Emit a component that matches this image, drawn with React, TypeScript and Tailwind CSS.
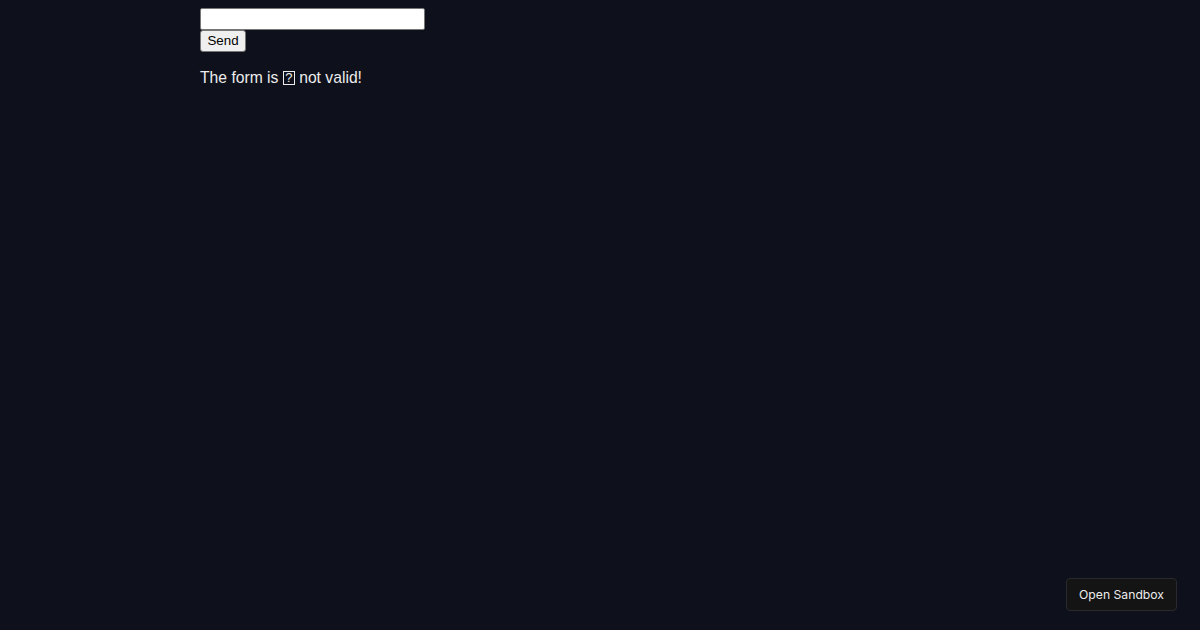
export default function App() {
  return (
    <div className="relative min-h-screen w-full bg-[#0e111b] font-['Liberation_Sans',Arial,sans-serif] text-[#ececec]">
      <div className="mx-auto w-[800px] pt-2">
        <form className="flex flex-col items-start" onSubmit={(e) => e.preventDefault()}>
          <input
            type="text"
            className="h-[22px] w-[225px] rounded-[2px] border border-[#767676] bg-white px-[2px] text-[13px] text-black outline-none"
          />
          <button
            type="submit"
            className="h-[22px] w-[46px] rounded-[3px] border border-[#767676] bg-[#efefef] text-center text-[13.33px] leading-none text-black"
          >
            Send
          </button>
        </form>
        <p className="mt-[17px] text-[15.7px] leading-[18px]">
          The form is{" "}
          <span className="inline-block h-[14px] w-[12px] -translate-y-px border border-[#ececec] text-center text-[13px] leading-[12px]">
            ?
          </span>{" "}
          not valid!
        </p>
      </div>
      <button className="absolute bottom-[19px] right-[23px] h-[33px] w-[111px] rounded-[4px] border border-[#2a2a2e] bg-[#141414] pt-px font-['Inter',sans-serif] text-[12.2px] text-[#ededed]">
        Open Sandbox
      </button>
    </div>
  );
}
